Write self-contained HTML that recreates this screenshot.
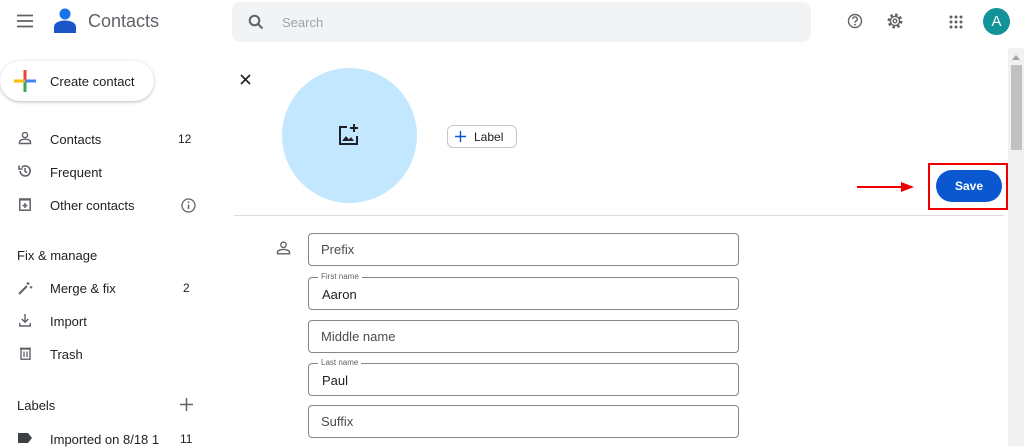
<!DOCTYPE html>
<html><head><meta charset="utf-8">
<style>
*{box-sizing:border-box;margin:0;padding:0}
body{width:1024px;height:446px;overflow:hidden;background:#fff;font-family:"Liberation Sans",Arial,sans-serif;color:#202124;position:relative}
.a{position:absolute}
.nav{font-size:13px;color:#202124}
.field{position:absolute;left:308px;width:431px;height:33px;border:1px solid #80868b;border-radius:4px;font-size:13px;color:#4a4d51;padding:8px 12px}
.field.f{color:#202124;padding:9px 13px}
.field .lb{position:absolute;top:-6px;left:9px;background:#fff;font-size:8px;color:#5f6368;padding:0 3px;line-height:10px}
svg{display:block}
</style></head><body>
<svg class="a" style="left:17px;top:14px" width="16" height="14" viewBox="0 0 16 14"><path d="M0 1.5h16M0 7h16M0 12.5h16" stroke="#5f6368" stroke-width="1.8"/></svg>
<svg class="a" style="left:52px;top:7px" width="26" height="28" viewBox="0 0 26 28"><circle cx="13" cy="7" r="5.5" fill="#1a73e8"/><path d="M2 26v-6c0-4 5-6.5 11-6.5s11 2.5 11 6.5v6z" fill="#1a56c8"/></svg>
<div class="a" style="left:88px;top:11px;font-size:18px;color:#5f6368">Contacts</div>
<div class="a" style="left:232px;top:2px;width:579px;height:40px;background:#f1f3f4;border-radius:8px"></div>
<svg class="a" style="left:248px;top:14px" width="16" height="16" viewBox="0 0 16 16"><circle cx="6.5" cy="6.5" r="4.8" stroke="#5f6368" stroke-width="2" fill="none"/><path d="M10 10l4.5 4.5" stroke="#5f6368" stroke-width="2"/></svg>
<div class="a" style="left:282px;top:15px;font-size:13px;color:#a0a4a8">Search</div>
<svg class="a" style="left:847px;top:13px" width="16" height="16" viewBox="0 0 16 16"><circle cx="8" cy="8" r="6.5" stroke="#5f6368" stroke-width="1.4" fill="none"/><path d="M5.8 6.2a2.2 2.2 0 1 1 3 2c-.7.3-.8.8-.8 1.5" stroke="#5f6368" stroke-width="1.4" fill="none"/><circle cx="8" cy="11.6" r=".9" fill="#5f6368"/></svg>
<svg class="a" style="left:886px;top:12px" width="18" height="18" viewBox="0 0 18 18"><circle cx="9" cy="9" r="6" stroke="#5f6368" stroke-width="3" stroke-dasharray="2.4 2.3" fill="none"/><circle cx="9" cy="9" r="4.6" stroke="#5f6368" stroke-width="1.4" fill="none"/><circle cx="9" cy="9" r="1.8" stroke="#5f6368" stroke-width="1.3" fill="none"/></svg>
<svg class="a" style="left:949px;top:15px" width="14" height="14" viewBox="0 0 14 14" fill="#5f6368"><circle cx="2" cy="2" r="1.5"/><circle cx="7" cy="2" r="1.5"/><circle cx="12" cy="2" r="1.5"/><circle cx="2" cy="7" r="1.5"/><circle cx="7" cy="7" r="1.5"/><circle cx="12" cy="7" r="1.5"/><circle cx="2" cy="12" r="1.5"/><circle cx="7" cy="12" r="1.5"/><circle cx="12" cy="12" r="1.5"/></svg>
<div class="a" style="left:983px;top:8px;width:27px;height:27px;border-radius:50%;background:#12939a;color:#fff;font-size:15px;text-align:center;line-height:27px">A</div>
<div class="a" style="left:0;top:61px;width:154px;height:40px;border-radius:20px;background:#fff;box-shadow:0 1px 3px rgba(60,64,67,.35)"></div>
<svg class="a" style="left:14px;top:70px" width="22" height="22" viewBox="0 0 22 22"><rect x="9.5" y="0" width="3" height="11" fill="#ea4335"/><rect x="9.5" y="11" width="3" height="11" fill="#34a853"/><rect x="0" y="9.5" width="11" height="3" fill="#fbbc04"/><rect x="11" y="9.5" width="11" height="3" fill="#4285f4"/></svg>
<div class="a nav" style="left:50px;top:74px">Create contact</div>
<svg class="a" style="left:18px;top:131px" width="14" height="14" viewBox="0 0 14 14"><circle cx="7" cy="4" r="2.6" stroke="#5f6368" stroke-width="1.4" fill="none"/><path d="M1.5 12.5v-1.5c0-1.8 3-2.8 5.5-2.8s5.5 1 5.5 2.8v1.5z" stroke="#5f6368" stroke-width="1.4" fill="none"/></svg>
<div class="a nav" style="left:50px;top:132px">Contacts</div><div class="a nav" style="left:178px;top:132px;font-size:12px">12</div>
<svg class="a" style="left:18px;top:164px" width="14" height="14" viewBox="0 0 14 14"><path d="M2.2 7a5 5 0 1 0 1.5-3.6" stroke="#5f6368" stroke-width="1.6" fill="none"/><path d="M1 1.5v3.5h3.5" stroke="#5f6368" stroke-width="1.6" fill="none"/><path d="M7 4v3.3l2.2 1.5" stroke="#5f6368" stroke-width="1.5" fill="none"/></svg>
<div class="a nav" style="left:50px;top:165px">Frequent</div>
<svg class="a" style="left:19px;top:198px" width="12" height="13" viewBox="0 0 12 13"><rect x=".8" y="1.8" width="10.4" height="10.4" stroke="#5f6368" stroke-width="1.5" fill="none"/><path d="M0 1h12M6 5v5M3.5 7.5h5" stroke="#5f6368" stroke-width="1.5"/></svg>
<div class="a nav" style="left:50px;top:198px">Other contacts</div>
<svg class="a" style="left:181px;top:198px" width="15" height="15" viewBox="0 0 15 15"><circle cx="7.5" cy="7.5" r="6.5" stroke="#5f6368" stroke-width="1.3" fill="none"/><path d="M7.5 6.5v4.5" stroke="#5f6368" stroke-width="1.5"/><circle cx="7.5" cy="4.3" r=".9" fill="#5f6368"/></svg>
<div class="a" style="left:17px;top:248px;font-size:13px;color:#202124">Fix &amp; manage</div>
<svg class="a" style="left:18px;top:281px" width="15" height="14" viewBox="0 0 15 14"><path d="M1 13l8-8" stroke="#5f6368" stroke-width="2"/><path d="M10 1v3M8.5 2.5h3M13 5v2.5M11.8 6.2h2.5" stroke="#5f6368" stroke-width="1.2"/></svg>
<div class="a nav" style="left:50px;top:281px">Merge &amp; fix</div><div class="a nav" style="left:183px;top:281px;font-size:12px">2</div>
<svg class="a" style="left:19px;top:314px" width="12" height="13" viewBox="0 0 12 13"><path d="M6 0v8M2.8 5l3.2 3.2L9.2 5M.8 9v3h10.4V9" stroke="#5f6368" stroke-width="1.4" fill="none"/></svg>
<div class="a nav" style="left:50px;top:314px">Import</div>
<svg class="a" style="left:20px;top:347px" width="11" height="13" viewBox="0 0 11 13"><rect x="1" y="2" width="9" height="10.2" stroke="#5f6368" stroke-width="1.4" fill="none"/><path d="M0 1.3h11M4 4.5v5.5M7 4.5v5.5" stroke="#5f6368" stroke-width="1.3"/></svg>
<div class="a nav" style="left:50px;top:347px">Trash</div>
<div class="a" style="left:17px;top:398px;font-size:13px;color:#202124">Labels</div>
<svg class="a" style="left:180px;top:398px" width="13" height="13" viewBox="0 0 13 13"><path d="M6.5 0v13M0 6.5h13" stroke="#5f6368" stroke-width="1.5"/></svg>
<svg class="a" style="left:18px;top:433px" width="14" height="10" viewBox="0 0 14 10"><path d="M0 0h10l4 5-4 5H0z" fill="#3c4043"/></svg>
<div class="a nav" style="left:50px;top:432px">Imported on 8/18 1</div><div class="a nav" style="left:180px;top:432px;font-size:12px">11</div>
<svg class="a" style="left:240px;top:74px" width="11" height="11" viewBox="0 0 11 11"><path d="M1 1l9 9M10 1l-9 9" stroke="#202124" stroke-width="1.6"/></svg>
<div class="a" style="left:282px;top:68px;width:135px;height:135px;border-radius:50%;background:#c2e7ff"></div>
<svg class="a" style="left:338px;top:124px" width="22" height="22" viewBox="0 0 22 22"><path d="M9 3H2v17h17v-8" stroke="#202124" stroke-width="2" fill="none"/><path d="M16 0v8M12 4h8" stroke="#202124" stroke-width="2"/><path d="M4 17l4-5 3 3.5 2-2.5 3 4z" fill="#202124"/></svg>
<div class="a" style="left:447px;top:125px;width:70px;height:23px;border:1px solid #c4c7c5;border-radius:6px"></div>
<svg class="a" style="left:455px;top:131px" width="11" height="11" viewBox="0 0 11 11"><path d="M5.5 0v11M0 5.5h11" stroke="#0b57d0" stroke-width="1.4"/></svg>
<div class="a" style="left:474px;top:130px;font-size:12px;color:#202124">Label</div>
<svg class="a" style="left:857px;top:181px" width="58" height="12" viewBox="0 0 58 12"><path d="M0 6h46" stroke="#e00" stroke-width="2"/><path d="M44 1l13 5-13 5z" fill="#e00"/></svg>
<div class="a" style="left:928px;top:163px;width:80px;height:47px;border:2px solid #e00"></div>
<div class="a" style="left:936px;top:170px;width:66px;height:32px;border-radius:16px;background:#0b57d0;color:#fff;font-size:12px;font-weight:bold;text-align:center;line-height:32px">Save</div>
<div class="a" style="left:234px;top:215px;width:770px;height:1px;background:#dadce0"></div>
<div class="a" style="left:1008px;top:48px;width:16px;height:398px;background:#f1f1f1"></div>
<div class="a" style="left:1011px;top:65px;width:11px;height:85px;background:#c1c1c1"></div>
<svg class="a" style="left:1012px;top:55px" width="8" height="5" viewBox="0 0 8 5"><path d="M0 5L4 0l4 5z" fill="#a3a3a3"/></svg>
<svg class="a" style="left:276px;top:241px" width="15" height="14" viewBox="0 0 15 14"><circle cx="7.5" cy="3.8" r="2.7" stroke="#5f6368" stroke-width="1.4" fill="none"/><path d="M1.5 12.8v-1.5c0-1.8 3.2-2.9 6-2.9s6 1.1 6 2.9v1.5z" stroke="#5f6368" stroke-width="1.4" fill="none"/></svg>
<div class="field" style="top:233px">Prefix</div>
<div class="field f" style="top:277px"><span class="lb">First name</span>Aaron</div>
<div class="field" style="top:320px">Middle name</div>
<div class="field f" style="top:363px"><span class="lb">Last name</span>Paul</div>
<div class="field" style="top:405px">Suffix</div>
</body></html>
